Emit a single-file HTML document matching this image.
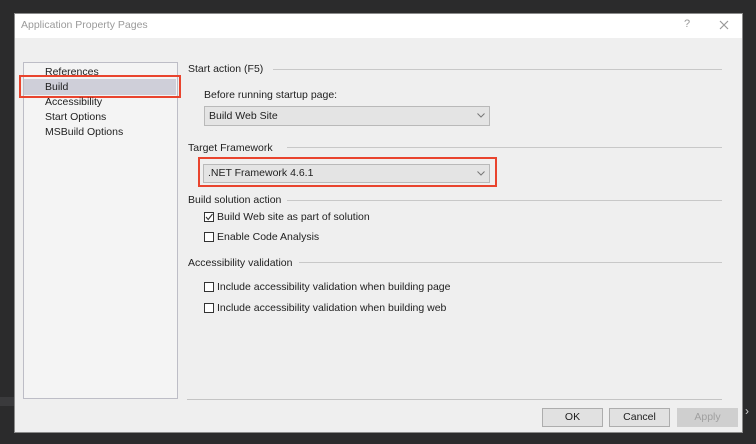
<!DOCTYPE html>
<html><head><style>
body{margin:0;width:756px;height:444px;background:#2b2b2c;position:relative;overflow:hidden;font-family:"Liberation Sans",sans-serif;font-size:10.5px;color:#1e1e1e}
.a{position:absolute;white-space:nowrap}
.dlg{position:absolute;left:14px;top:13px;width:729px;height:420px;background:#efefef;border:1px solid #8a8a8a;box-sizing:border-box}
.line{position:absolute;height:1px;background:#c8c8c8}
.dd{position:absolute;background:#e4e4e4;border:1px solid #b9b9b9;box-sizing:border-box;padding:3px 0 0 4px}
.cb{position:absolute;width:10px;height:10px;border:1px solid #333;background:#fff;box-sizing:border-box}
.btn{position:absolute;top:408px;width:61px;height:19px;background:#e1e1e1;border:1px solid #adadad;box-sizing:border-box;text-align:center;line-height:17px}
.red{position:absolute;border:2px solid #e9442e;box-sizing:border-box}
</style></head><body>
<div class="a" style="left:0;top:397px;width:14px;height:9px;background:#3a3a3c"></div>
<div class="dlg"></div>
<div class="a" style="left:15px;top:14px;width:727px;height:24px;background:#fff"></div>
<div class="a" style="left:21px;top:19px;color:#9a9a9a;font-size:10.5px">Application Property Pages</div>
<div class="a" style="left:684px;top:18px;color:#999;font-size:11px">?</div>
<svg class="a" style="left:719px;top:20px" width="10" height="10"><path d="M1 1L9 9M9 1L1 9" stroke="#999" stroke-width="1.2"/></svg>
<div class="a" style="left:745px;top:404px;color:#ccc;font-size:12px">›</div>

<div class="a" style="left:23px;top:62px;width:155px;height:337px;background:#f4f4f4;border:1px solid #bdbdc6;box-sizing:border-box"></div>
<div class="a" style="left:24px;top:79px;width:152px;height:16px;background:#cfcfd9"></div>
<div class="red" style="left:19px;top:75px;width:162px;height:23px"></div>
<div class="a" style="left:45px;top:66px">References</div>
<div class="a" style="left:45px;top:81px">Build</div>
<div class="a" style="left:45px;top:96px">Accessibility</div>
<div class="a" style="left:45px;top:111px">Start Options</div>
<div class="a" style="left:45px;top:126px">MSBuild Options</div>

<div class="a" style="left:188px;top:63px">Start action (F5)</div>
<div class="line" style="left:273px;top:69px;width:449px"></div>
<div class="a" style="left:204px;top:89px">Before running startup page:</div>
<div class="dd" style="left:204px;top:106px;width:286px;height:20px">Build Web Site</div>
<svg class="a" style="left:477px;top:113px" width="8" height="5"><path d="M0.5 0.5L4 4L7.5 0.5" stroke="#777" fill="none"/></svg>

<div class="a" style="left:188px;top:142px">Target Framework</div>
<div class="line" style="left:287px;top:147px;width:435px"></div>
<div class="dd" style="left:203px;top:164px;width:287px;height:19px;padding-top:2px">.NET Framework 4.6.1</div>
<svg class="a" style="left:477px;top:171px" width="8" height="5"><path d="M0.5 0.5L4 4L7.5 0.5" stroke="#777" fill="none"/></svg>
<div class="red" style="left:198px;top:157px;width:299px;height:30px"></div>

<div class="a" style="left:188px;top:194px">Build solution action</div>
<div class="line" style="left:287px;top:200px;width:435px"></div>
<div class="cb" style="left:204px;top:212px"></div>
<svg class="a" style="left:204px;top:212px" width="10" height="10"><path d="M2 5L4.2 7.5L8.5 2" stroke="#333" stroke-width="1.1" fill="none"/></svg>
<div class="a" style="left:217px;top:211px">Build Web site as part of solution</div>
<div class="cb" style="left:204px;top:232px"></div>
<div class="a" style="left:217px;top:231px">Enable Code Analysis</div>

<div class="a" style="left:188px;top:257px">Accessibility validation</div>
<div class="line" style="left:299px;top:262px;width:423px"></div>
<div class="cb" style="left:204px;top:282px"></div>
<div class="a" style="left:217px;top:281px">Include accessibility validation when building page</div>
<div class="cb" style="left:204px;top:303px"></div>
<div class="a" style="left:217px;top:302px">Include accessibility validation when building web</div>

<div class="line" style="left:187px;top:399px;width:535px;background:#c4c4c4"></div>
<div class="btn" style="left:542px">OK</div>
<div class="btn" style="left:609px">Cancel</div>
<div class="btn" style="left:677px;background:#cfcfcf;border-color:#cfcfcf;color:#a0a0a0">Apply</div>
</body></html>
